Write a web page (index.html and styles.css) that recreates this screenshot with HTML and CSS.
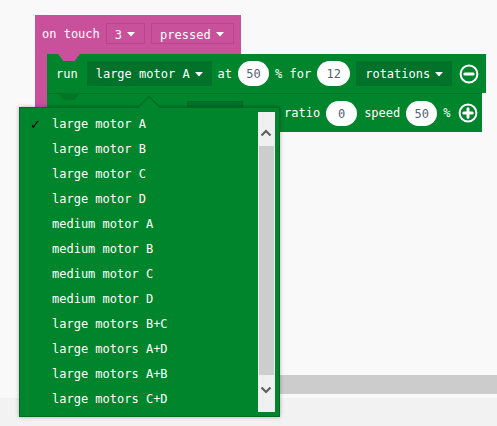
FILE: index.html
```html
<!DOCTYPE html>
<html lang="en">
<head>
  <meta charset="UTF-8">
  <meta name="viewport" content="width=device-width, initial-scale=1.0">
  <title>on touch</title>
  <link rel="stylesheet" href="styles.css">
</head>
<body>
<div class="editor">
  <div class="workspace">
    <!-- horizontal workspace scrollbar -->
    <div class="hscroll"></div>

    <!-- event block -->
    <div class="block-event">
      <div class="event-head">
        <span class="label">on touch</span>
        <span class="field field-pink">3<svg class="caret" width="8" height="5" viewBox="0 0 8 5"><path d="M0 0h8L4 4.5z"/></svg></span>
        <span class="field field-pink">pressed<svg class="caret" width="8" height="5" viewBox="0 0 8 5"><path d="M0 0h8L4 4.5z"/></svg></span>
      </div>
    </div>

    <!-- motor block -->
    <div class="block-stack">
      <div class="stmt stmt-run">
        <span class="notch notch-pink"></span>
        <span class="label">run</span>
        <span class="field field-green motor-field">large motor A<svg class="caret" width="8" height="5" viewBox="0 0 8 5"><path d="M0 0h8L4 4.5z"/></svg></span>
        <span class="label">at</span>
        <span class="num">50</span>
        <span class="label">% for</span>
        <span class="num num-wide">12</span>
        <span class="field field-green">rotations<svg class="caret" width="8" height="5" viewBox="0 0 8 5"><path d="M0 0h8L4 4.5z"/></svg></span>
        <svg class="toggle" width="20" height="20" viewBox="0 0 20 20">
          <circle cx="10" cy="10" r="8.4" fill="none" stroke="#fff" stroke-width="2"/>
          <path d="M5.8 10h8.4" stroke="#fff" stroke-width="3" stroke-linecap="round"/>
        </svg>
      </div>
      <div class="stmt stmt-params">
        <span class="notch notch-dark"></span>
        <span class="field field-green turn-field"></span>
        <span class="label">ratio</span>
        <span class="num">0</span>
        <span class="label speed">speed</span>
        <span class="num">50</span>
        <span class="label">%</span>
        <svg class="toggle toggle-add" width="20" height="20" viewBox="0 0 20 20">
          <circle cx="10" cy="10" r="8.4" fill="none" stroke="#fff" stroke-width="2"/>
          <path d="M5.8 10h8.4M10 5.8v8.4" stroke="#fff" stroke-width="3" stroke-linecap="round"/>
        </svg>
      </div>
    </div>

    <!-- open dropdown for the motor field -->
    <div class="dropdown">
      <span class="pointer"></span>
      <ul class="menu">
        <li class="checked">large motor A</li>
        <li>large motor B</li>
        <li>large motor C</li>
        <li>large motor D</li>
        <li>medium motor A</li>
        <li>medium motor B</li>
        <li>medium motor C</li>
        <li>medium motor D</li>
        <li>large motors B+C</li>
        <li>large motors A+D</li>
        <li>large motors A+B</li>
        <li>large motors C+D</li>
      </ul>
      <div class="vscroll">
        <svg class="arrow arrow-up" width="12" height="8" viewBox="0 0 12 8"><path d="M1.5 6.5L6 2l4.5 4.5" fill="none" stroke="#606060" stroke-width="2.2"/></svg>
        <span class="thumb"></span>
        <svg class="arrow arrow-down" width="12" height="8" viewBox="0 0 12 8"><path d="M1.5 1.5L6 6l4.5-4.5" fill="none" stroke="#606060" stroke-width="2.2"/></svg>
      </div>
    </div>
  </div>
  <div class="toolbar"></div>
</div>
</body>
</html>
```

FILE: styles.css
```css
* {
  margin: 0;
  padding: 0;
  box-sizing: border-box;
}

body {
  font-family: "DejaVu Sans Mono", "Liberation Mono", monospace;
  font-size: 12px;
  color: #fff;
  background: #f9f9f9;
  overflow: hidden;
}

.editor {
  width: 497px;
  height: 426px;
  display: flex;
  flex-direction: column;
}

.workspace {
  position: relative;
  height: 398px;
  flex-shrink: 0;
  background: #f9f9f9;
}

.toolbar {
  flex: 1;
  background: #f2f2f2;
}

.hscroll {
  position: absolute;
  left: 160px;
  right: 0;
  top: 375px;
  height: 19px;
  background: #cccccc;
}

/* Blocks */
.block-event {
  position: absolute;
  left: 35px;
  top: 15px;
  width: 206px;
  height: 130px;
  background: #c9519c;
}

.event-head {
  display: flex;
  align-items: center;
  gap: 6px;
  height: 39px;
  padding: 0 0 2px 7px;
}

.label {
  flex-shrink: 0;
  white-space: nowrap;
  line-height: 1;
}

.field {
  flex-shrink: 0;
  display: flex;
  align-items: center;
  gap: 5px;
  height: 25px;
  padding: 1px 9px 0;
  white-space: nowrap;
}

.field-pink {
  height: 21px;
  padding: 2px 9px 0 8px;
  border: 1px solid #b7468c;
}

.field-green {
  background: #00722a;
}

.caret {
  fill: #fff;
}

.block-stack {
  position: absolute;
  left: 47px;
  top: 54px;
}

.stmt {
  position: relative;
  display: flex;
  align-items: center;
  gap: 6px;
  height: 39px;
  background: #00852c;
}

.stmt-run {
  width: 439px;
  padding-left: 9px;
}

.motor-field {
  margin-left: 3px;
}

.stmt-params {
  width: 435px;
  padding-left: 140px;
  border-top: 1px solid #007526;
}

.turn-field {
  width: 56px;
  margin-right: 35px;
  border: 1px solid #006a22;
}

.num {
  flex-shrink: 0;
  display: flex;
  align-items: center;
  justify-content: center;
  min-width: 31px;
  height: 25px;
  padding: 1px 8px 0;
  border-radius: 13px;
  background: #fff;
  color: #575e75;
}

.num-wide {
  min-width: 33px;
}

.speed {
  margin-left: 1px;
}

.toggle {
  flex-shrink: 0;
  margin-left: 1px;
}

.toggle-add {
  margin-left: 2px;
}

.notch {
  position: absolute;
  left: 11px;
  top: 0;
  width: 22px;
  height: 7px;
  clip-path: polygon(0 0, 100% 0, 75% 100%, 25% 100%);
}

.notch-pink {
  background: #c9519c;
}

.notch-dark {
  top: -1px;
  background: #007526;
}

/* Dropdown menu */
.dropdown {
  position: absolute;
  z-index: 2;
  left: 19px;
  top: 107px;
  width: 261px;
  height: 310px;
  background: #00852c;
  border: 1px solid #006a20;
  box-shadow: 0 0 4px rgba(0, 0, 0, 0.3);
}

.pointer {
  position: absolute;
  left: 121px;
  top: -9px;
  width: 16px;
  height: 16px;
  background: #00852c;
  border-top: 1px solid #006a20;
  border-left: 1px solid #006a20;
  transform: rotate(45deg);
}

.menu {
  position: relative;
  list-style: none;
  padding: 4px 0;
}

.menu li {
  position: relative;
  height: 25px;
  line-height: 25px;
  padding-left: 32px;
  white-space: nowrap;
}

.menu li.checked::before {
  content: "\2713";
  position: absolute;
  left: 10px;
  top: 0;
  font-family: "DejaVu Sans", sans-serif;
  font-size: 13px;
  color: #000;
}

.vscroll {
  position: absolute;
  top: 4px;
  bottom: 4px;
  right: 4px;
  width: 17px;
  background: #f0f0f0;
}

.thumb {
  position: absolute;
  left: 1px;
  right: 1px;
  top: 34px;
  bottom: 37px;
  background: #cdcdcd;
}

.arrow {
  position: absolute;
  left: 2px;
}

.arrow-up {
  top: 17px;
}

.arrow-down {
  bottom: 18px;
}
```
